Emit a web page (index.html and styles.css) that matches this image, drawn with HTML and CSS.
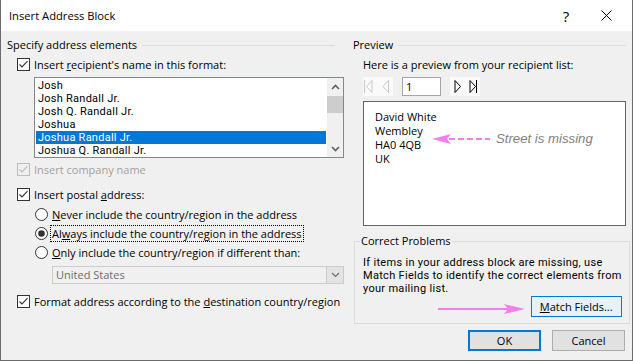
FILE: index.html
```html
<!DOCTYPE html>
<html>
<head>
<meta charset="utf-8">
<link rel="stylesheet" href="styles.css">
</head>
<body>
<div class="window">
  <div class="titlebar">
    <span class="title">Insert Address Block</span>
    <span class="help">?</span>
    <span class="close"><svg width="11" height="11" viewBox="0 0 11 11"><path d="M0.5 0.5 L10.5 10.5 M10.5 0.5 L0.5 10.5" stroke="#000" stroke-width="1" fill="none"/></svg></span>
  </div>
  <div class="content">
    <div class="col-left">
      <div class="group-head"><span>Specify address elements</span><i class="rule rule-left"></i></div>

      <div class="row cb-row r-name">
        <svg class="cb" width="13" height="13" viewBox="0 0 13 13"><rect x="0.5" y="0.5" width="12" height="12" fill="#fff" stroke="#333"/><path d="M2.5 6.5 L5 9 L10.5 3.2" stroke="#333" stroke-width="1.1" fill="none"/></svg>
        <span>Insert <u>r</u>ecipient's name in this format:</span>
      </div>

      <div class="listbox">
        <ul class="items">
          <li>Josh</li>
          <li>Josh Randall Jr.</li>
          <li>Josh Q. Randall Jr.</li>
          <li>Joshua</li>
          <li class="sel">Joshua Randall Jr.</li>
          <li>Joshua Q. Randall Jr.</li>
        </ul>
        <div class="vscroll">
          <div class="sb-up"><svg width="9" height="6" viewBox="0 0 9 6"><path d="M1 5 L4.5 1.5 L8 5" stroke="#606060" stroke-width="1.6" fill="none"/></svg></div>
          <div class="sb-thumb"></div>
          <div class="sb-track"></div>
          <div class="sb-down"><svg width="9" height="6" viewBox="0 0 9 6"><path d="M1 1 L4.5 4.5 L8 1" stroke="#606060" stroke-width="1.6" fill="none"/></svg></div>
        </div>
      </div>

      <div class="row cb-row r-company disabled">
        <svg class="cb" width="13" height="13" viewBox="0 0 13 13"><rect x="0.5" y="0.5" width="12" height="12" fill="#f0f0f0" stroke="#bcbcbc"/><path d="M2.5 6.5 L5 9 L10.5 3.2" stroke="#bcbcbc" stroke-width="1.1" fill="none"/></svg>
        <span>Insert company name</span>
      </div>

      <div class="row cb-row r-postal">
        <svg class="cb" width="13" height="13" viewBox="0 0 13 13"><rect x="0.5" y="0.5" width="12" height="12" fill="#fff" stroke="#333"/><path d="M2.5 6.5 L5 9 L10.5 3.2" stroke="#333" stroke-width="1.1" fill="none"/></svg>
        <span>Insert postal <u>a</u>ddress:</span>
      </div>

      <div class="radios">
        <div class="radio-row">
          <svg class="rb" width="13" height="13" viewBox="0 0 13 13"><circle cx="6.5" cy="6.5" r="6" fill="#fff" stroke="#333"/></svg>
          <span class="rlabel"><u>N</u>ever include the country/region in the address</span>
        </div>
        <div class="radio-row">
          <svg class="rb" width="13" height="13" viewBox="0 0 13 13"><circle cx="6.5" cy="6.5" r="6" fill="#fff" stroke="#333"/><circle cx="6.5" cy="6.5" r="3.3" fill="#333"/></svg>
          <span class="rlabel focus">Al<u>w</u>ays include the country/region in the address</span>
        </div>
        <div class="radio-row">
          <svg class="rb" width="13" height="13" viewBox="0 0 13 13"><circle cx="6.5" cy="6.5" r="6" fill="#fff" stroke="#333"/></svg>
          <span class="rlabel"><u>O</u>nly include the country/region if different than:</span>
        </div>
      </div>

      <div class="combo">
        <span class="combo-text">United States</span>
        <span class="combo-btn"><svg width="9" height="6" viewBox="0 0 9 6"><path d="M1 1 L4.5 4.5 L8 1" stroke="#707070" stroke-width="1.2" fill="none"/></svg></span>
      </div>

      <div class="row cb-row r-format">
        <svg class="cb" width="13" height="13" viewBox="0 0 13 13"><rect x="0.5" y="0.5" width="12" height="12" fill="#fff" stroke="#333"/><path d="M2.5 6.5 L5 9 L10.5 3.2" stroke="#333" stroke-width="1.1" fill="none"/></svg>
        <span>Format address according to the <u>d</u>estination country/region</span>
      </div>
    </div>

    <div class="col-right">
      <div class="group-head"><span>Preview</span><i class="rule"></i></div>
      <div class="row r-here"><span>Here is a preview from your recipient list:</span></div>
      <div class="nav">
        <span class="navbox"><svg width="30" height="19" viewBox="0 0 30 19"><path d="M1.5 3 V16" stroke="#c8c8c8" stroke-width="1"/><path d="M3.5 9.5 L9 3.5 V15.5 Z" stroke="#c8c8c8" stroke-width="1" fill="none"/><path d="M20 9.5 L25.5 3.5 V15.5 Z" stroke="#c8c8c8" stroke-width="1" fill="none"/></svg></span>
        <span class="recno">1</span>
        <span class="navbox"><svg width="30" height="19" viewBox="0 0 30 19"><path d="M10.5 9.5 L5 3.5 V15.5 Z" stroke="#000" stroke-width="1" fill="none"/><path d="M25.5 9.5 L20 3.5 V15.5 Z" stroke="#000" stroke-width="1" fill="none"/><path d="M26.5 3 V16" stroke="#000" stroke-width="1"/></svg></span>
      </div>
      <div class="preview">
        <div>David White</div>
        <div>Wembley</div>
        <div>HA0 4QB</div>
        <div>UK</div>
        <svg class="note-arrow" width="60" height="12" viewBox="0 0 60 12"><path d="M0 6 L19 1 L15 6 L19 11 Z" fill="#f47ef0"/><path d="M17 6 H58" stroke="#f47ef0" stroke-width="2" stroke-dasharray="6 3" fill="none"/></svg>
        <span class="note">Street is missing</span>
      </div>

      <fieldset class="problems">
        <legend>Correct Problems</legend>
        <p>If items in your address block are missing, use<br>Match Fields to identify the correct elements from<br>your mailing list.</p>
        <button class="btn match" type="button"><u>M</u>atch Fields...</button>
      </fieldset>

      <div class="actions">
        <button class="btn ok" type="button">OK</button>
        <button class="btn" type="button">Cancel</button>
      </div>
    </div>
  </div>
  <svg class="match-arrow" width="90" height="12" viewBox="0 0 90 12"><path d="M0 6 H72" stroke="#f47ef0" stroke-width="2" fill="none"/><path d="M87 6 L66 1 L70 6 L66 11 Z" fill="#f47ef0"/></svg>
</div>
</body>
</html>
```

FILE: styles.css
```css
html, body {
  margin: 0;
  padding: 0;
  background: #f0f0f0;
}

body {
  font-family: "Open Sans", "Noto Sans", sans-serif;
  font-size: 11px;
  color: #000;
}

.window {
  position: relative;
  width: 633px;
  height: 361px;
  box-sizing: border-box;
  border: 1px solid #6b6b6b;
  border-top: 0;
  background: #f0f0f0;
  display: flex;
  flex-direction: column;
  overflow: hidden;
}

.titlebar {
  height: 31px;
  flex: none;
  background: #fff;
  display: flex;
  align-items: center;
  padding-left: 8px;
}

.title {
  font-size: 11.2px;
  line-height: 14px;
}

.help {
  margin-left: auto;
  width: 20px;
  text-align: center;
  font-size: 15px;
  line-height: 16px;
}

.close {
  width: 30px;
  margin-left: 15px;
  margin-right: 11px;
  display: flex;
  justify-content: center;
}

.content {
  flex: 1;
  display: grid;
  grid-template-columns: 338px 273px;
  column-gap: 8px;
  padding: 0 6px;
}

.col-left, .col-right {
  display: flex;
  flex-direction: column;
}

.group-head {
  height: 16px;
  margin-top: 6px;
  display: flex;
  align-items: center;
  gap: 5px;
  line-height: 16px;
}

.rule {
  flex: 1;
  height: 1px;
  background: #dcdcdc;
}

.rule-left {
  margin-right: 10px;
}

.row {
  height: 13px;
  display: flex;
  align-items: center;
  gap: 4px;
  line-height: 13px;
  white-space: nowrap;
}

.cb, .rb {
  flex: none;
  display: block;
}

.cb-row {
  margin-left: 10px;
}

.r-name { margin-top: 5px; }
.r-company { margin-top: 5px; }
.r-postal { margin-top: 12px; }
.r-format { margin-top: 11px; }

.disabled { color: #a0a0a0; }

u { text-decoration: underline; text-underline-offset: 1px; }

.tight {
  font-family: Roboto, "Open Sans", sans-serif;
  font-size: 11px;
  letter-spacing: 0.25px;
}

.listbox {
  margin-top: 6px;
  margin-left: 27px;
  width: 310px;
  height: 81px;
  box-sizing: border-box;
  border: 1px solid #828790;
  background: #fff;
  display: flex;
}

.items {
  list-style: none;
  margin: 0;
  padding: 1px 1px 0 1px;
  width: 290px;
  flex: none;
  font-family: Roboto, "Open Sans", sans-serif;
  font-size: 11px;
  letter-spacing: 0.25px;
}

.items li {
  height: 13px;
  line-height: 13px;
  padding-left: 2px;
  white-space: nowrap;
}

.items li.sel {
  background: #0078d7;
  color: #fff;
}

.vscroll {
  width: 16px;
  flex: none;
  background: #f0f0f0;
  display: flex;
  flex-direction: column;
}

.sb-up, .sb-down {
  height: 18px;
  display: flex;
  align-items: center;
  justify-content: center;
}

.sb-down { height: 17px; }

.sb-thumb {
  height: 17px;
  background: #cdcdcd;
}

.sb-track { flex: 1; }

.radios {
  margin-top: 4px;
  margin-left: 28px;
  display: flex;
  flex-direction: column;
}

.radio-row {
  height: 19px;
  display: flex;
  align-items: center;
  gap: 2px;
  white-space: nowrap;
}

.rlabel {
  border: 1px dotted transparent;
  padding: 0 1px;
  line-height: 15px;
}

.rlabel.focus {
  border-color: #000;
}

.combo {
  margin-top: 4px;
  margin-left: 45px;
  width: 292px;
  height: 18px;
  box-sizing: border-box;
  border: 1px solid #cccccc;
  background: #f0f0f0;
  display: flex;
  align-items: stretch;
}

.combo-text {
  flex: 1;
  padding-left: 3px;
  line-height: 16px;
  color: #6d6d6d;
}

.combo-btn {
  width: 16px;
  border-left: 1px solid #cccccc;
  background: #e3e3e3;
  display: flex;
  align-items: center;
  justify-content: center;
}

.r-here {
  margin-top: 5px;
  margin-left: 10px;
}

.nav {
  margin-top: 6px;
  margin-left: 10px;
  height: 19px;
  display: flex;
  gap: 9px;
}

.navbox {
  width: 30px;
  height: 19px;
  background: #fafafa;
}

.navbox svg { display: block; }

.recno {
  width: 39px;
  height: 19px;
  box-sizing: border-box;
  border: 1px solid #a6a6a6;
  background: #fff;
  padding-left: 3px;
  line-height: 17px;
}

.preview {
  position: relative;
  margin-top: 5px;
  margin-left: 10px;
  width: 263px;
  height: 125px;
  box-sizing: border-box;
  border: 1px solid #646464;
  background: #fff;
  padding: 8px 0 0 11px;
  line-height: 14px;
}

.note-arrow {
  position: absolute;
  left: 68px;
  top: 31px;
}

.note {
  position: absolute;
  left: 132px;
  top: 29px;
  font-family: "Liberation Sans", Arial, sans-serif;
  font-style: italic;
  font-size: 13.2px;
  line-height: 16px;
  color: #7f7f7f;
}

.problems {
  margin: 8px 0 0 1px;
  width: 272px;
  box-sizing: border-box;
  border: 1px solid #dcdcdc;
  padding: 0 7px 6px 8px;
  display: flex;
  flex-direction: column;
}

.problems legend {
  padding: 0 1px;
  margin-left: -3px;
  line-height: 14px;
}

.problems p {
  margin: 8px 0 0 0;
  line-height: 13px;
  white-space: nowrap;
  font-family: Roboto, "Open Sans", sans-serif;
  font-size: 11px;
  letter-spacing: 0.3px;
}

.btn {
  font-family: inherit;
  font-size: 11px;
  color: #000;
  height: 21px;
  width: 73px;
  box-sizing: border-box;
  border: 1px solid #adadad;
  background: #e1e1e1;
  padding: 0;
  line-height: 17px;
}

.match {
  align-self: flex-end;
  margin-top: 1px;
  width: 91px;
  border-color: #0078d7;
  background: #e5f1fb;
}

.actions {
  margin-top: 6px;
  display: flex;
  justify-content: flex-end;
  gap: 11px;
  padding-right: 1px;
}

.ok {
  border: 2px solid #0078d7;
}

.match-arrow {
  position: absolute;
  left: 437px;
  top: 303px;
}
```
